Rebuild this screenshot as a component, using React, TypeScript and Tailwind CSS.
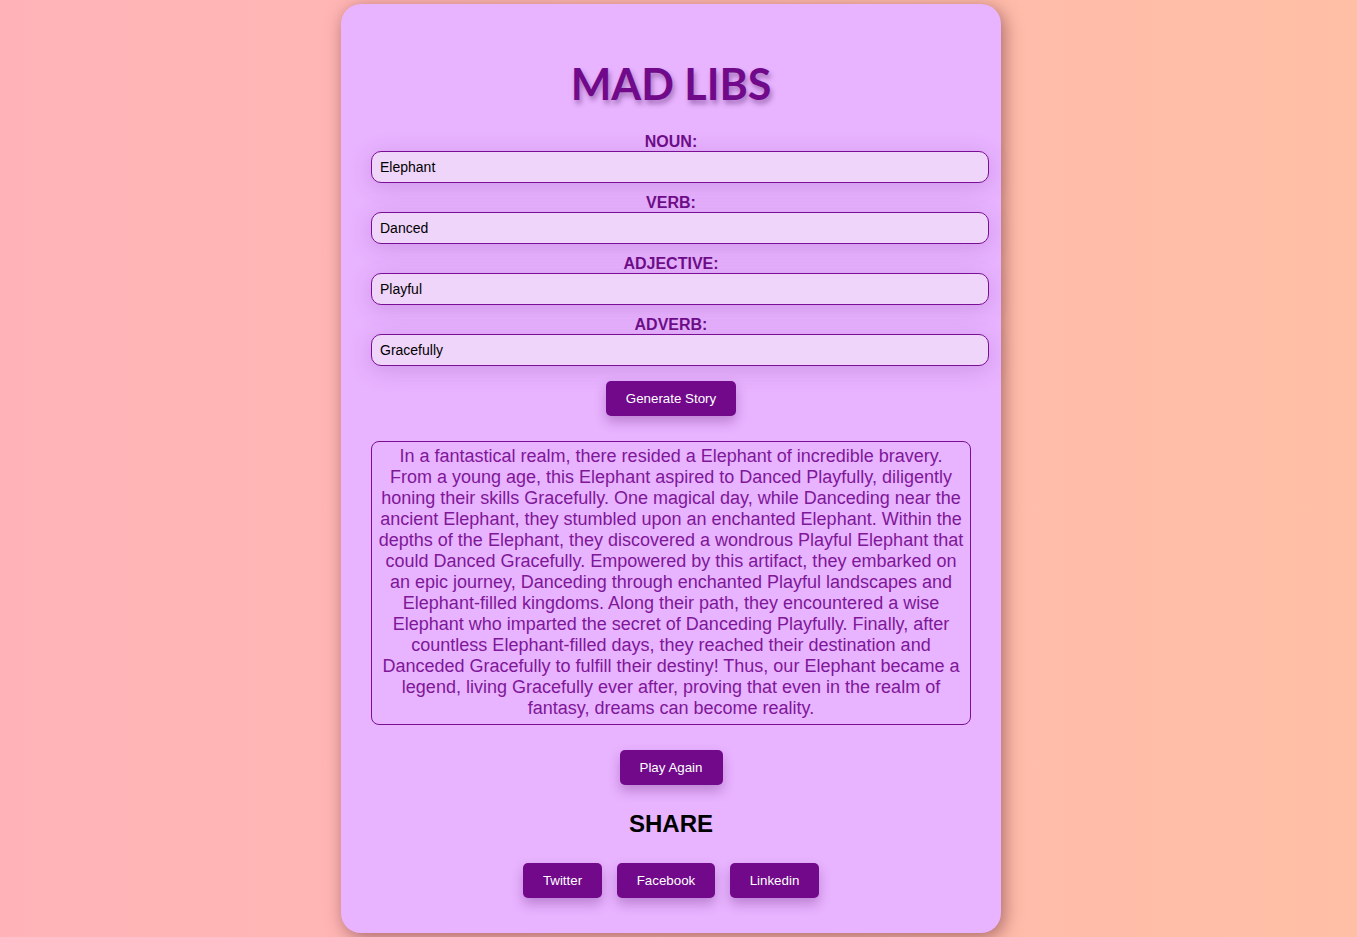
import { useState } from "react";

type Words = { noun: string; verb: string; adjective: string; adverb: string };

const fields: Array<{ key: keyof Words; label: string }> = [
  { key: "noun", label: "NOUN:" },
  { key: "verb", label: "VERB:" },
  { key: "adjective", label: "ADJECTIVE:" },
  { key: "adverb", label: "ADVERB:" },
];

const makeStory = ({ noun, verb, adjective, adverb }: Words) =>
  `In a fantastical realm, there resided a ${noun} of incredible bravery. From a young age, this ${noun} aspired to ${verb} ${adjective}ly, diligently honing their skills ${adverb}. One magical day, while ${verb}ing near the ancient ${noun}, they stumbled upon an enchanted ${noun}. Within the depths of the ${noun}, they discovered a wondrous ${adjective} ${noun} that could ${verb} ${adverb}. Empowered by this artifact, they embarked on an epic journey, ${verb}ing through enchanted ${adjective} landscapes and ${noun}-filled kingdoms. Along their path, they encountered a wise ${noun} who imparted the secret of ${verb}ing ${adjective}ly. Finally, after countless ${noun}-filled days, they reached their destination and ${verb}ed ${adverb} to fulfill their destiny! Thus, our ${noun} became a legend, living ${adverb} ever after, proving that even in the realm of fantasy, dreams can become reality.`;

const btn =
  "bg-[#71098a] text-white text-[13.33px] rounded-[5px] shadow-[0_6px_12px_rgba(90,20,110,0.3)] hover:bg-[#5e0873]";

export default function App() {
  const [words, setWords] = useState<Words>({
    noun: "Elephant",
    verb: "Danced",
    adjective: "Playful",
    adverb: "Gracefully",
  });
  const [story, setStory] = useState(makeStory(words));

  return (
    <div className="min-h-[937px] bg-gradient-to-r from-[#ffb3b8] to-[#ffbfa5] flex justify-center pt-1 pr-[15px] font-['Liberation_Sans',Arial,sans-serif]">
      <div className="w-[660px] h-[929px] bg-[#e8b3ff] rounded-[20px] shadow-[3px_4px_18px_rgba(110,50,60,0.6)] flex flex-col items-center px-[30px]">
        <h1 className="mt-[56px] text-[43px] leading-[48px] font-bold text-[#700a8a] font-['Lato',sans-serif] [text-shadow:2px_4px_5px_rgba(90,40,110,0.45)]">
          MAD LIBS
        </h1>

        <form
          className="w-full mt-[24px] flex flex-col items-center"
          onSubmit={(e) => {
            e.preventDefault();
            setStory(makeStory(words));
          }}
        >
          {fields.map((f) => (
            <div key={f.key} className="w-full flex flex-col items-center">
              <label className="text-base leading-[19px] font-bold text-[#6d0d88]">{f.label}</label>
              <input
                value={words[f.key]}
                onChange={(e) => setWords((p) => ({ ...p, [f.key]: e.target.value }))}
                className="self-start w-[618px] h-[32px] mb-[10px] px-[8px] text-sm text-black bg-[#f0d5fa] border border-[#7a0f95] rounded-[10px] outline-none shadow-[0_4px_22px_rgba(120,50,150,0.22)]"
              />
            </div>
          ))}
          <button type="submit" className={`${btn} mt-[5px] w-[130px] h-[35px]`}>
            Generate Story
          </button>
        </form>

        <p className="mt-[25px] w-[600px] border border-[#7a0f95] rounded-[8px] px-[6px] pt-[4px] pb-[5px] text-center text-[18px] leading-[21px] text-[#7e1798]">
          {story}
        </p>

        <button type="button" onClick={() => setStory("")} className={`${btn} mt-[25px] w-[103px] h-[35px]`}>
          Play Again
        </button>

        <h2 className="mt-[25px] text-2xl leading-[28px] font-bold text-black">SHARE</h2>

        <div className="mt-[25px] flex gap-[15px]">
          <button type="button" className={`${btn} w-[79px] h-[35px]`}>Twitter</button>
          <button type="button" className={`${btn} w-[98px] h-[35px]`}>Facebook</button>
          <button type="button" className={`${btn} w-[89px] h-[35px]`}>Linkedin</button>
        </div>
      </div>
    </div>
  );
}
